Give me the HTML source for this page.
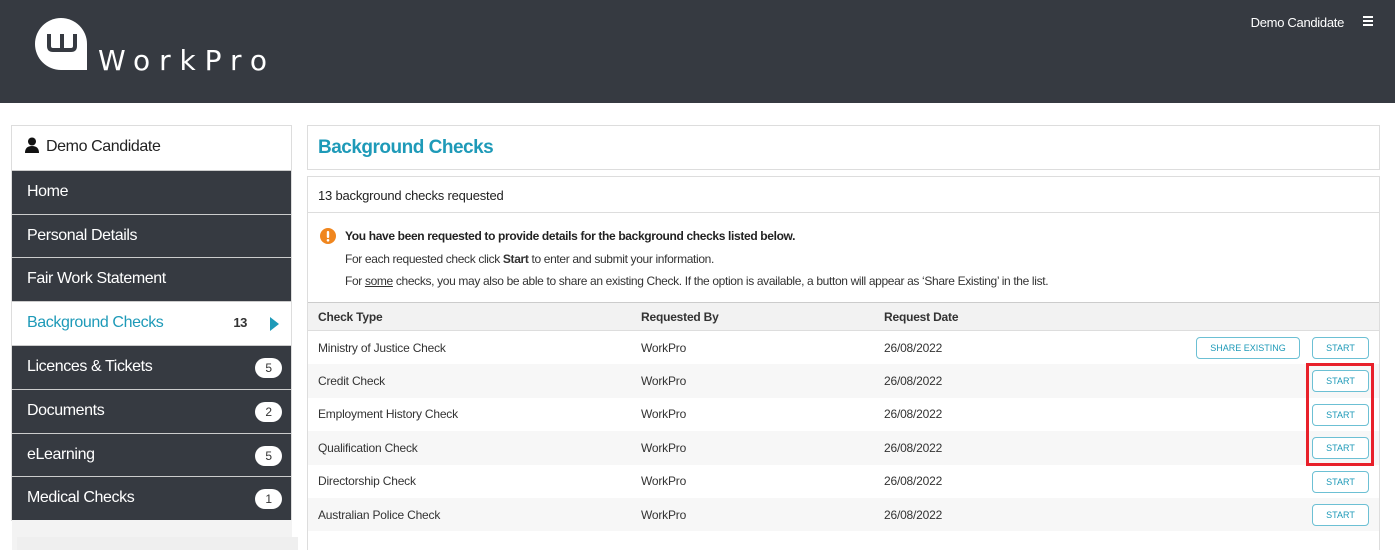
<!DOCTYPE html>
<html><head><meta charset="utf-8"><style>
*{margin:0;padding:0;box-sizing:border-box}
body{width:1395px;height:550px;overflow:hidden;background:#fff;font-family:"Liberation Sans",sans-serif;position:relative;color:#333}
.hdr{position:absolute;left:0;top:0;width:1395px;height:103px;background:#363a41}
.user{position:absolute;right:51px;top:15px;color:#fff;font-size:13px;letter-spacing:-0.3px}
.menu{position:absolute;right:22px;top:16px;width:10px}
.menu i{display:block;height:2px;background:#fff;margin-bottom:2px}
.side{position:absolute;left:11px;top:125px;width:281px;border:1px solid #ddd;background:#fff}
.side .it{height:43.8px;border-top:1px solid #ccc;background:#363a41;color:#fff;font-size:16px;padding-left:15px;line-height:42px;position:relative;letter-spacing:-0.4px}
.side .first{background:#fff;color:#222;border-top:none;padding-left:12px}
.side .act{background:#fff;color:#1e9ab8}
.badge{position:absolute;right:9px;top:12px;width:27px;height:20px;border-radius:10px;background:#fff;color:#333;font-size:12px;text-align:center;line-height:20px}
.grey1{position:absolute;left:12px;top:520px;width:280px;height:30px;background:#f3f3f3}
.grey2{position:absolute;left:17px;top:537px;width:281px;height:13px;background:#efefef}
.box{position:absolute;left:307px;width:1073px;border:1px solid #ddd;background:#fff}
.title{top:125px;height:45px;color:#1e9ab8;font-size:19px;padding:11px 10px;font-weight:bold;letter-spacing:-0.5px}
.cnt{top:176px;height:37px;font-size:13px;padding:11px 10px;color:#222;letter-spacing:-0.2px}
.info{top:212px;height:91px;font-size:12px;color:#333;letter-spacing:-0.35px}
.tbl{position:absolute;left:307px;top:302px;width:1073px;height:248px;border-left:1px solid #ddd;border-right:1px solid #ddd}
.th{height:29px;background:#f2f2f2;border-top:1px solid #ccc;border-bottom:1px solid #ddd;font-size:12px;font-weight:bold;color:#333;position:relative;letter-spacing:-0.2px}
.row{height:33.4px;position:relative;font-size:12px;color:#333;letter-spacing:-0.2px}
.row:nth-child(even){background:#f7f7f7}
.c{position:absolute;top:50%;transform:translateY(-50%)}
.btn{position:absolute;top:6px;height:22px;border:1px solid #6cc0d4;border-radius:4px;color:#1e9ab8;font-size:9px;text-align:center;line-height:20px;background:#fff;letter-spacing:0}
</style></head><body>
<div class="hdr">
<svg style="position:absolute;left:35px;top:18px" width="240" height="56" viewBox="0 0 240 56">
<path d="M26 0 A26 26 0 0 0 0 26 A26 26 0 0 0 26 52 L52 52 L52 26 A26 26 0 0 0 26 0Z" fill="#fff"/>
<path d="M14 16 V28 Q14 32 18 32 H36 Q40 32 40 28 V16 M27 16 V30" stroke="#363a41" stroke-width="4" fill="none"/>
<text x="63" y="52" fill="#fff" font-size="28" font-family="DejaVu Sans" font-weight="normal" letter-spacing="3" textLength="172">WorkPro</text>
</svg>
<div class="user">Demo Candidate</div>
<div class="menu"><i></i><i></i><i></i></div>
</div>
<div class="side">
<div class="it first"><svg width="16" height="16" viewBox="0 0 16 16" style="vertical-align:-2px;margin-right:6px"><circle cx="8" cy="4.5" r="4" fill="#111"/><path d="M1 16 Q1 9 8 9 Q15 9 15 16Z" fill="#111"/></svg>Demo Candidate</div>
<div class="it">Home</div>
<div class="it">Personal Details</div>
<div class="it">Fair Work Statement</div>
<div class="it act">Background Checks<span style="position:absolute;right:44px;color:#333;font-size:13px;font-weight:bold">13</span><svg style="position:absolute;right:12px;top:15px" width="9" height="14"><path d="M0 0L9 7L0 14Z" fill="#1e9ab8"/></svg></div>
<div class="it">Licences &amp; Tickets<span class="badge">5</span></div>
<div class="it">Documents<span class="badge">2</span></div>
<div class="it">eLearning<span class="badge">5</span></div>
<div class="it">Medical Checks<span class="badge">1</span></div>
</div>
<div class="grey1"></div><div class="grey2"></div>
<div class="box title">Background Checks</div>
<div class="box cnt">13 background checks requested</div>
<div class="box info">
<svg style="position:absolute;left:12px;top:15px" width="16" height="16"><circle cx="8" cy="8" r="8" fill="#f0861e"/><rect x="6.8" y="3" width="2.4" height="7" rx="1" fill="#fff"/><circle cx="8" cy="12.3" r="1.3" fill="#fff"/></svg>
<div style="position:absolute;left:37px;top:16px;font-weight:bold;color:#222">You have been requested to provide details for the background checks listed below.</div>
<div style="position:absolute;left:37px;top:39px">For each requested check click <b>Start</b> to enter and submit your information.</div>
<div style="position:absolute;left:37px;top:61px">For <u>some</u> checks, you may also be able to share an existing Check. If the option is available, a button will appear as ‘Share Existing’ in the list.</div>
</div>
<div class="tbl">
<div class="th"><span class="c" style="left:10px">Check Type</span><span class="c" style="left:333px">Requested By</span><span class="c" style="left:576px">Request Date</span></div>
<div>
<div class="row"><span class="c" style="left:10px">Ministry of Justice Check</span><span class="c" style="left:333px">WorkPro</span><span class="c" style="left:576px">26/08/2022</span><span class="btn" style="left:888px;width:104px">SHARE EXISTING</span><span class="btn" style="left:1004px;width:57px">START</span></div>
<div class="row"><span class="c" style="left:10px">Credit Check</span><span class="c" style="left:333px">WorkPro</span><span class="c" style="left:576px">26/08/2022</span><span class="btn" style="left:1004px;width:57px">START</span></div>
<div class="row"><span class="c" style="left:10px">Employment History Check</span><span class="c" style="left:333px">WorkPro</span><span class="c" style="left:576px">26/08/2022</span><span class="btn" style="left:1004px;width:57px">START</span></div>
<div class="row"><span class="c" style="left:10px">Qualification Check</span><span class="c" style="left:333px">WorkPro</span><span class="c" style="left:576px">26/08/2022</span><span class="btn" style="left:1004px;width:57px">START</span></div>
<div class="row"><span class="c" style="left:10px">Directorship Check</span><span class="c" style="left:333px">WorkPro</span><span class="c" style="left:576px">26/08/2022</span><span class="btn" style="left:1004px;width:57px">START</span></div>
<div class="row"><span class="c" style="left:10px">Australian Police Check</span><span class="c" style="left:333px">WorkPro</span><span class="c" style="left:576px">26/08/2022</span><span class="btn" style="left:1004px;width:57px">START</span></div>
</div>
</div>
<div style="position:absolute;left:1306px;top:363px;width:68px;height:103px;border:3px solid #e8202a"></div>
</body></html>
